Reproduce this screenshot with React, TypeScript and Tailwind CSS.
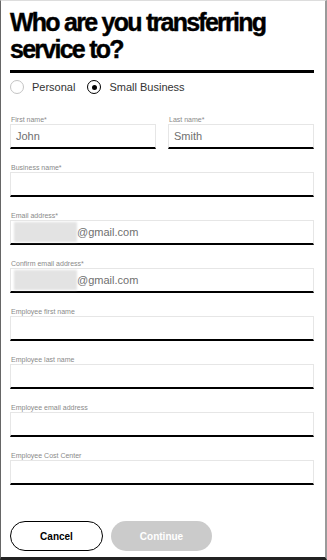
import React from "react";

const font = { fontFamily: '"Liberation Sans", Arial, sans-serif' };

function Field({ label, value, redacted, className = "" }: { label: string; value?: string; redacted?: boolean; className?: string }) {
  return (
    <div className={"flex flex-col " + className}>
      <div className="h-[8px] text-[7px] leading-[8px] text-[#8a8a8a] pl-[1px]">{label}</div>
      <div className="h-[25px] border border-[#e6e6e6] border-b-2 border-b-black bg-white flex items-center">
        {redacted && <div className="ml-[3px] w-[63px] h-[20px] bg-[#e3e3e3] blur-[1px]" />}
        {value && (
          <span className={"text-[11px] text-[#6f6f6f] " + (redacted ? "" : "pl-[5px]")}>{value}</span>
        )}
      </div>
    </div>
  );
}

export default function App() {
  return (
    <div style={font} className="w-[327px] h-[560px] bg-white border-l border-l-[#666] border-t border-t-[#ddd] border-r-2 border-r-[#9a9a9a] border-b-[3px] border-b-[#222] overflow-hidden">
      <div className="pl-[9px] pr-[11px] pt-[8px]">
        <h1 className="text-[25px] leading-[27px] font-bold tracking-[-0.07em] text-black [-webkit-text-stroke:0.4px_black]">
          Who are you transferring
          <br />
          service to?
        </h1>
        <div className="mt-[7px] h-[3px] bg-black" />
        <div className="flex items-center h-[28px] text-[11px] text-[#333]">
          <span className="w-[14px] h-[14px] rounded-full border border-[#c4c4c4]" />
          <span className="ml-[8px]">Personal</span>
          <span className="ml-[12px] w-[14px] h-[14px] rounded-full border border-black flex items-center justify-center">
            <span className="w-[5px] h-[5px] rounded-full bg-black" />
          </span>
          <span className="ml-[8px]">Small Business</span>
        </div>
        <div className="mt-[15px] flex flex-col gap-[15px]">
          <div className="flex gap-[12px]">
            <Field label="First name*" value="John" className="flex-1" />
            <Field label="Last name*" value="Smith" className="flex-1" />
          </div>
          <Field label="Business name*" />
          <Field label="Email address*" value="@gmail.com" redacted />
          <Field label="Confirm email address*" value="@gmail.com" redacted />
          <Field label="Employee first name" />
          <Field label="Employee last name" />
          <Field label="Employee email address" />
          <Field label="Employee Cost Center" />
        </div>
        <div className="mt-[36px] flex gap-[8px]">
          <button className="w-[93px] h-[30px] rounded-full border border-black bg-white text-[10px] font-bold text-black">
            Cancel
          </button>
          <button className="w-[101px] h-[30px] rounded-full bg-[#cbcbcb] text-[10px] font-bold text-white">
            Continue
          </button>
        </div>
      </div>
    </div>
  );
}
